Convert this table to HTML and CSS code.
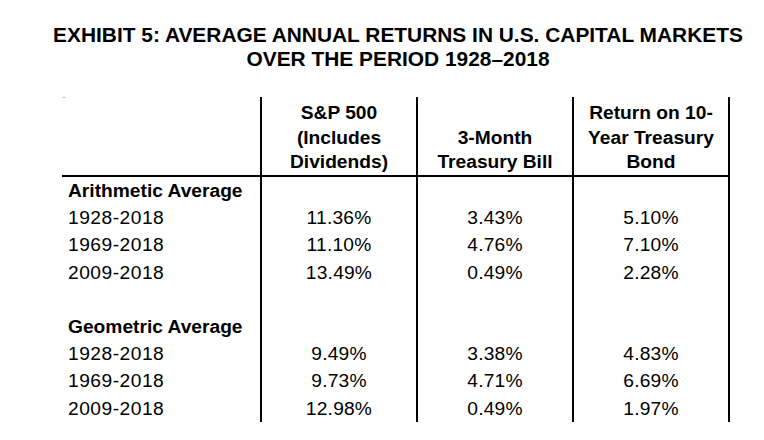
FILE: index.html
```html
<!DOCTYPE html>
<html lang="en">
<head>
<meta charset="utf-8">
<title>Exhibit 5</title>
<link rel="stylesheet" href="styles.css">
</head>
<body>
<div class="exhibit">
  <h1 class="title">EXHIBIT 5: AVERAGE ANNUAL RETURNS IN U.S. CAPITAL MARKETS<br>OVER THE PERIOD 1928–2018</h1>
  <div class="table">
    <div class="head stub"><span class="tick"></span></div>
    <div class="head col">S&amp;P 500<br>(Includes<br>Dividends)</div>
    <div class="head col">3-Month<br>Treasury Bill</div>
    <div class="head col last">Return on 10-<br>Year Treasury<br>Bond</div>

    <div class="label group">Arithmetic Average</div>
    <div class="num"></div><div class="num"></div><div class="num last"></div>

    <div class="label">1928-2018</div>
    <div class="num">11.36%</div><div class="num">3.43%</div><div class="num last">5.10%</div>

    <div class="label">1969-2018</div>
    <div class="num">11.10%</div><div class="num">4.76%</div><div class="num last">7.10%</div>

    <div class="label">2009-2018</div>
    <div class="num">13.49%</div><div class="num">0.49%</div><div class="num last">2.28%</div>

    <div class="label"></div>
    <div class="num"></div><div class="num"></div><div class="num last"></div>

    <div class="label group">Geometric Average</div>
    <div class="num"></div><div class="num"></div><div class="num last"></div>

    <div class="label">1928-2018</div>
    <div class="num">9.49%</div><div class="num">3.38%</div><div class="num last">4.83%</div>

    <div class="label">1969-2018</div>
    <div class="num">9.73%</div><div class="num">4.71%</div><div class="num last">6.69%</div>

    <div class="label">2009-2018</div>
    <div class="num">12.98%</div><div class="num">0.49%</div><div class="num last">1.97%</div>
  </div>
</div>
</body>
</html>
```

FILE: styles.css
```css
html, body {
  margin: 0;
  padding: 0;
  background: #ffffff;
}

body {
  font-family: "Liberation Sans", Arial, sans-serif;
  color: #000000;
  width: 764px;
  height: 440px;
  overflow: hidden;
}

.exhibit {
  padding-top: 23px;
}

.title {
  margin: 0 0 26px 32px;
  font-size: 20.9px;
  line-height: 24px;
  font-weight: bold;
  text-align: center;
}

.table {
  margin-left: 62px;
  display: grid;
  grid-template-columns: 198px 156px 156px 158px;
  grid-template-rows: 80px repeat(9, 27.2px);
  font-size: 19.2px;
}

.head {
  border-bottom: 2px solid #000;
  box-sizing: border-box;
}

.stub {
  position: relative;
}

.tick {
  position: absolute;
  left: 0;
  top: 0;
  width: 4px;
  height: 1px;
  background: #c8c8c8;
}

.col {
  border-left: 2px solid #000;
  display: flex;
  flex-direction: column;
  justify-content: flex-end;
  text-align: center;
  font-weight: bold;
  line-height: 24.5px;
  padding-bottom: 0.5px;
  white-space: nowrap;
}

.col.last,
.num.last {
  border-right: 2px solid #000;
}

.label {
  padding-left: 6px;
  line-height: 27.2px;
  white-space: nowrap;
  letter-spacing: 0.5px;
}

.label.group {
  font-weight: bold;
  letter-spacing: 0;
}

.num {
  border-left: 2px solid #000;
  box-sizing: border-box;
  text-align: center;
  line-height: 27.2px;
  letter-spacing: 0.2px;
}
```
